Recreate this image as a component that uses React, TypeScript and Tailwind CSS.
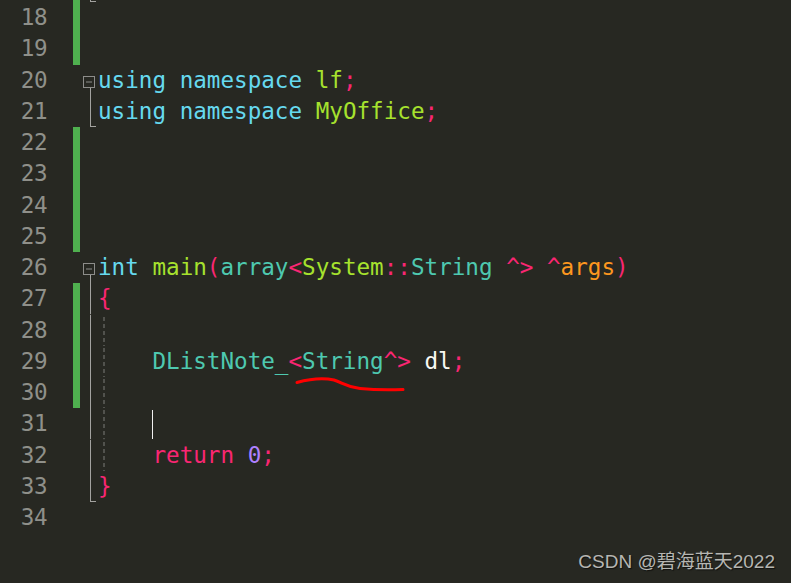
import React from "react";

type Tok = [string, string];
type Fold = "none" | "start" | "mid" | "end";

const C = {
  cyan: "text-[#66d9ef]",
  green: "text-[#a6e22e]",
  pink: "text-[#f92672]",
  teal: "text-[#4ec9b0]",
  orange: "text-[#fd971f]",
  purple: "text-[#ae81ff]",
  white: "text-[#f8f8f2]",
};

interface Row {
  n: number | null;
  bar: boolean;
  fold: Fold;
  guide?: boolean;
  cursor?: boolean;
  toks: Tok[];
}

const rows: Row[] = [
  { n: null, bar: true, fold: "end", toks: [] },
  { n: 18, bar: true, fold: "none", toks: [] },
  { n: 19, bar: true, fold: "none", toks: [] },
  {
    n: 20,
    bar: false,
    fold: "start",
    toks: [
      ["using", C.cyan],
      [" ", C.white],
      ["namespace", C.cyan],
      [" ", C.white],
      ["lf", C.green],
      [";", C.pink],
    ],
  },
  {
    n: 21,
    bar: false,
    fold: "end",
    toks: [
      ["using", C.cyan],
      [" ", C.white],
      ["namespace", C.cyan],
      [" ", C.white],
      ["MyOffice", C.green],
      [";", C.pink],
    ],
  },
  { n: 22, bar: true, fold: "none", toks: [] },
  { n: 23, bar: true, fold: "none", toks: [] },
  { n: 24, bar: true, fold: "none", toks: [] },
  { n: 25, bar: true, fold: "none", toks: [] },
  {
    n: 26,
    bar: false,
    fold: "start",
    toks: [
      ["int", C.cyan],
      [" ", C.white],
      ["main", C.green],
      ["(", C.pink],
      ["array", C.teal],
      ["<", C.pink],
      ["System", C.green],
      ["::", C.pink],
      ["String", C.teal],
      [" ", C.white],
      ["^>", C.pink],
      [" ", C.white],
      ["^", C.pink],
      ["args", C.orange],
      [")", C.pink],
    ],
  },
  { n: 27, bar: true, fold: "mid", toks: [["{", C.pink]] },
  { n: 28, bar: true, fold: "mid", guide: true, toks: [] },
  {
    n: 29,
    bar: true,
    fold: "mid",
    guide: true,
    toks: [
      ["    ", C.white],
      ["DListNote_", C.teal],
      ["<", C.pink],
      ["String", C.teal],
      ["^>", C.pink],
      [" ", C.white],
      ["dl", C.white],
      [";", C.pink],
    ],
  },
  { n: 30, bar: true, fold: "mid", guide: true, toks: [] },
  { n: 31, bar: false, fold: "mid", guide: true, cursor: true, toks: [["    ", C.white]] },
  {
    n: 32,
    bar: false,
    fold: "mid",
    guide: true,
    toks: [
      ["    ", C.white],
      ["return", C.pink],
      [" ", C.white],
      ["0", C.purple],
      [";", C.pink],
    ],
  },
  { n: 33, bar: false, fold: "end", toks: [["}", C.pink]] },
  { n: 34, bar: false, fold: "none", toks: [] },
];

function FoldMark({ fold }: { fold: Fold }) {
  if (fold === "none") return null;
  const line = "#a3a3a0";
  return (
    <svg width="18" height="31.25" viewBox="0 0 18 31.25" className="block">
      {fold === "start" && (
        <>
          <rect x="3.5" y="11.5" width="11" height="11" fill="#272822" stroke="#8d8d8a" strokeWidth="1" />
          <line x1="6" y1="17" x2="12" y2="17" stroke="#8d8d8a" strokeWidth="1" />
          <line x1="10.5" y1="23" x2="10.5" y2="31.25" stroke={line} strokeWidth="1" />
        </>
      )}
      {fold === "mid" && <line x1="10.5" y1="0" x2="10.5" y2="31.25" stroke={line} strokeWidth="1" />}
      {fold === "end" && (
        <>
          <line x1="10.5" y1="0" x2="10.5" y2="30.5" stroke={line} strokeWidth="1" />
          <line x1="10" y1="30.5" x2="16" y2="30.5" stroke={line} strokeWidth="1" />
        </>
      )}
    </svg>
  );
}

export default function App() {
  return (
    <div className="relative w-[791px] h-[583px] overflow-hidden bg-[#272822]">
      <div
        className="flex flex-col pt-[2px] mt-[-31.25px] text-[22.6px] leading-[31.25px]"
        style={{ fontFamily: '"DejaVu Sans Mono", "Liberation Mono", monospace' }}
      >
        {rows.map((r, idx) => (
          <div key={idx} className="flex h-[31.25px] shrink-0">
            <div className="w-[47px] text-right text-[#8f908a] tracking-[-0.5px]">{r.n ?? ""}</div>
            <div className="w-[26px]" />
            <div className={`w-[7px] ${r.bar ? "bg-[#4fb04f]" : ""}`} />
            <div className="w-[18px]">
              <FoldMark fold={r.fold} />
            </div>
            <div className="relative flex-1 whitespace-pre">
              {r.guide && (
                <svg className="absolute left-[5px] top-0" width="2" height="31.25">
                  <line x1="1" y1="2" x2="1" y2="31.25" stroke="#7c7c78" strokeWidth="1" strokeDasharray="4 3" />
                </svg>
              )}
              {r.toks.map((t, i) => (
                <span key={i} className={t[1]}>
                  {t[0]}
                </span>
              ))}
              {r.cursor && <span className="inline-block w-px h-[29px] bg-[#f0f0f0] align-middle" />}
            </div>
          </div>
        ))}
      </div>

      <svg className="absolute left-0 top-0 pointer-events-none" width="791" height="583">
        <path
          d="M297 382.5 C 308 379.5, 322 377.5, 334 380 C 343 383, 346 387, 360 388.5 C 375 390, 392 390, 403 389.5"
          fill="none"
          stroke="#ff0000"
          strokeWidth="3"
          strokeLinecap="round"
        />
      </svg>

      <div
        className="absolute right-[16px] bottom-[9px] text-[19px] leading-[24px] text-[#b6b6b2] [text-shadow:1px_1px_1px_rgba(0,0,0,0.6)]"
        style={{ fontFamily: '"Liberation Sans", "Noto Sans CJK SC", sans-serif' }}
      >
        CSDN @碧海蓝天2022
      </div>
    </div>
  );
}
